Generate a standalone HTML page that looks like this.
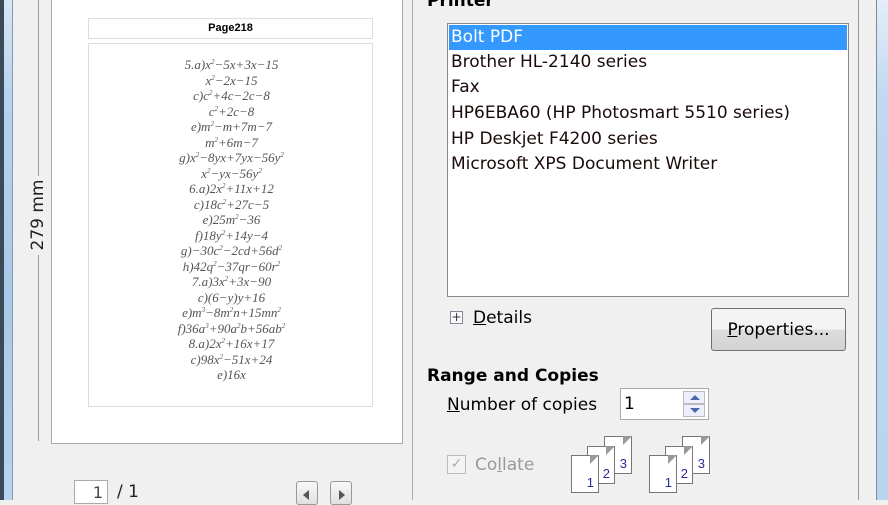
<!DOCTYPE html>
<html><head><meta charset="utf-8"><style>
*{margin:0;padding:0;box-sizing:border-box}
body{width:888px;height:500px;overflow:hidden;background:#f0f0f0;position:relative;font-family:"DejaVu Sans","Liberation Sans",sans-serif;color:#000}
.a{position:absolute}
.row{position:absolute;left:3px;font-size:17px;height:25px;line-height:25px;white-space:nowrap;color:#1a0a0a}
.m{position:absolute;left:0;width:285px;text-align:center;font-family:"Liberation Serif",serif;font-style:italic;font-size:13px;color:#555}
.m div{height:15.5px;line-height:15.5px;white-space:nowrap}
sup{font-size:7px;line-height:0;vertical-align:5px}
.pg{position:absolute;width:28px;height:38px;background:#fff;border:1px solid #777}
.pg:after{content:"";position:absolute;right:-1px;top:-1px;width:0;height:0;border-left:9px solid #999;border-bottom:9px solid transparent;}
.pg span{position:absolute;right:4px;bottom:2px;font-size:13px;color:#2a2a9a;font-family:"Liberation Sans",sans-serif}
u{text-decoration:underline}
</style></head><body>
<div class="a" style="left:0;top:0;width:4px;height:500px;background:#3a4a5a"></div>
<div class="a" style="left:4px;top:0;width:8px;height:500px;background:linear-gradient(#d8e6f4,#b6d2ee 20%,#a9c9ea 60%,#b8d4ee)"></div>
<div class="a" style="left:12px;top:0;width:1px;height:500px;background:#8a9aaa"></div>
<div class="a" style="left:38px;top:0;width:1px;height:176px;background:#999"></div>
<div class="a" style="left:38px;top:255px;width:1px;height:186px;background:#999"></div>
<div class="a" style="left:38px;top:215px;transform:translate(-50%,-50%) rotate(-90deg);font-size:17px;white-space:nowrap;color:#222">279 mm</div>
<div class="a" style="left:51px;top:-2px;width:352px;height:446px;background:#fff;border:1px solid #aaa;border-top:none"></div>
<div class="a" style="left:88px;top:18px;width:285px;height:21px;border:1px solid #ddd;text-align:center;font-family:'Liberation Sans',sans-serif;font-weight:bold;font-size:11px;line-height:19px">Page218</div>
<div class="a" style="left:88px;top:43px;width:285px;height:364px;border:1px solid #ddd">
<div class="m" style="top:13px">
<div>5.a)x<sup>2</sup>−5x+3x−15</div><div>x<sup>2</sup>−2x−15</div><div>c)c<sup>2</sup>+4c−2c−8</div><div>c<sup>2</sup>+2c−8</div><div>e)m<sup>2</sup>−m+7m−7</div><div>m<sup>2</sup>+6m−7</div><div>g)x<sup>2</sup>−8yx+7yx−56y<sup>2</sup></div><div>x<sup>2</sup>−yx−56y<sup>2</sup></div><div>6.a)2x<sup>2</sup>+11x+12</div><div>c)18c<sup>2</sup>+27c−5</div><div>e)25m<sup>2</sup>−36</div><div>f)18y<sup>2</sup>+14y−4</div><div>g)−30c<sup>2</sup>−2cd+56d<sup>2</sup></div><div>h)42q<sup>2</sup>−37qr−60r<sup>2</sup></div><div>7.a)3x<sup>2</sup>+3x−90</div><div>c)(6−y)y+16</div><div>e)m<sup>3</sup>−8m<sup>2</sup>n+15mn<sup>2</sup></div><div>f)36a<sup>3</sup>+90a<sup>2</sup>b+56ab<sup>2</sup></div><div>8.a)2x<sup>2</sup>+16x+17</div><div>c)98x<sup>2</sup>−51x+24</div><div>e)16x</div>
</div>
</div>
<div class="a" style="left:74px;top:480px;width:34px;height:24px;background:#fff;border:1px solid #aaa;text-align:right;padding-right:4px;font-size:16px;line-height:24px;color:#444">1</div>
<div class="a" style="left:117px;top:482px;font-size:17px;color:#222">/ 1</div>
<div class="a" style="left:296px;top:481px;width:22px;height:24px;border:1px solid #999;border-radius:3px;background:linear-gradient(#f8f8f8,#e0e0e0)"><div class="a" style="left:6px;top:8px;border-right:6px solid #555;border-top:5px solid transparent;border-bottom:5px solid transparent"></div></div>
<div class="a" style="left:330px;top:481px;width:22px;height:24px;border:1px solid #999;border-radius:3px;background:linear-gradient(#f8f8f8,#e0e0e0)"><div class="a" style="left:8px;top:8px;border-left:6px solid #555;border-top:5px solid transparent;border-bottom:5px solid transparent"></div></div>
<div class="a" style="left:412px;top:0;width:1px;height:500px;background:#aaa"></div>
<div class="a" style="left:427px;top:-9px;font-weight:bold;font-size:17px">Printer</div>
<div class="a" style="left:447px;top:23px;width:402px;height:274px;background:#fff;border:1px solid #888">
<div class="a" style="left:1px;top:1px;width:398px;height:25px;background:#3399ff"></div>
<div class="row" style="top:1px;color:#fff">Bolt PDF</div>
<div class="row" style="top:26px">Brother HL-2140 series</div>
<div class="row" style="top:51px">Fax</div>
<div class="row" style="top:77px">HP6EBA60 (HP Photosmart 5510 series)</div>
<div class="row" style="top:103px">HP Deskjet F4200 series</div>
<div class="row" style="top:128px">Microsoft XPS Document Writer</div>
</div>
<div class="a" style="left:450px;top:311px;width:13px;height:13px;border:1px solid #889;background:#fafafa;font-size:12px;line-height:10px;text-align:center;color:#334">+</div>
<div class="a" style="left:473px;top:308px;font-size:17px"><u>D</u>etails</div>
<div class="a" style="left:711px;top:308px;width:135px;height:43px;border:1px solid #707070;border-radius:3px;background:linear-gradient(#f4f4f4 50%,#dedede 50%,#d2d2d2);text-align:center;line-height:43px;font-size:17px"><u>P</u>roperties...</div>
<div class="a" style="left:427px;top:366px;font-weight:bold;font-size:17px">Range and Copies</div>
<div class="a" style="left:447px;top:395px;font-size:17px"><u>N</u>umber of copies</div>
<div class="a" style="left:620px;top:388px;width:89px;height:32px;background:#fff;border:1px solid #aaa;font-size:17px;line-height:30px;padding-left:3px">1
<div class="a" style="left:62px;top:2px;width:22px;height:13px;border:1px solid #bbb;background:#eef"><div class="a" style="left:6px;top:3px;border-bottom:5px solid #4a6aa8;border-left:5px solid transparent;border-right:5px solid transparent"></div></div>
<div class="a" style="left:62px;top:15px;width:22px;height:13px;border:1px solid #bbb;background:#eef"><div class="a" style="left:6px;top:3px;border-top:5px solid #4a6aa8;border-left:5px solid transparent;border-right:5px solid transparent"></div></div>
</div>
<div class="a" style="left:447px;top:455px;width:19px;height:19px;border:1px solid #bbb;background:#f4f4f4;color:#aaa;font-size:14px;text-align:center;line-height:17px">✓</div>
<div class="a" style="left:475px;top:455px;font-size:17px;color:#999">Co<u>l</u>late</div>
<div class="pg" style="left:604px;top:436px"><span>3</span></div>
<div class="pg" style="left:587px;top:446px"><span>2</span></div>
<div class="pg" style="left:571px;top:455px"><span>1</span></div>
<div class="pg" style="left:682px;top:436px"><span>3</span></div>
<div class="pg" style="left:665px;top:446px"><span>2</span></div>
<div class="pg" style="left:649px;top:455px"><span>1</span></div>
<div class="a" style="left:858px;top:0;width:1px;height:500px;background:#999"></div>
<div class="a" style="left:876px;top:0;width:1px;height:500px;background:#7a8a9a"></div>
<div class="a" style="left:877px;top:0;width:11px;height:500px;background:linear-gradient(#e4eef8,#c0d8f0 20%,#b8d4ee)"></div>
</body></html>
